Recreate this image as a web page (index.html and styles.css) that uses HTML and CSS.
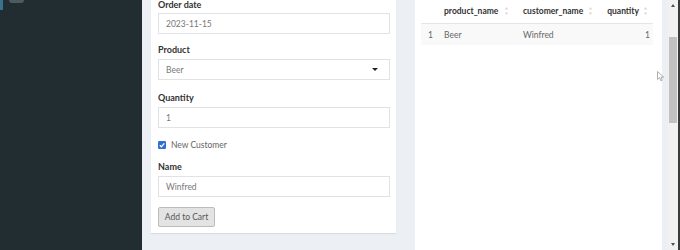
FILE: index.html
```html
<!DOCTYPE html>
<html>
<head>
<meta charset="utf-8">
<link rel="stylesheet" href="styles.css">
</head>
<body>
<aside class="sidebar">
  <div class="sidebar-top">
    <span class="bit-blue"></span>
    <span class="bit-grey"></span>
  </div>
</aside>
<main class="content">
  <section class="box form-box">
    <div class="group">
      <div class="label label-first">Order date</div>
      <div class="input">2023-11-15</div>
    </div>
    <div class="group group-select">
      <div class="label">Product</div>
      <div class="input select"><span>Beer</span><span class="caret"></span></div>
    </div>
    <div class="group group-qty">
      <div class="label">Quantity</div>
      <div class="input">1</div>
    </div>
    <div class="check-row">
      <svg class="checkbox" width="8" height="8" viewBox="0 0 8 8"><rect x="0" y="0" width="8" height="8" rx="1.2" fill="#2f6fd1"/><polyline points="1.8,4.2 3.4,5.8 6.3,2.4" fill="none" stroke="#fff" stroke-width="1.3"/></svg>
      <span>New Customer</span>
    </div>
    <div class="group">
      <div class="label">Name</div>
      <div class="input">Winfred</div>
    </div>
    <button class="btn">Add to Cart</button>
  </section>
  <section class="box table-box">
    <table class="dt">
      <colgroup><col class="c-idx"><col class="c-prod"><col class="c-cust"><col class="c-qty"></colgroup>
      <thead>
        <tr>
          <th></th>
          <th><div class="th-in"><span>product_name</span><svg class="sort" width="3" height="8" viewBox="0 0 3 8"><polygon points="1.5,0 3,2.5 0,2.5" fill="#d4d4d4"/><polygon points="0,5.5 3,5.5 1.5,8" fill="#d4d4d4"/></svg></div></th>
          <th><div class="th-in"><span>customer_name</span><svg class="sort" width="3" height="8" viewBox="0 0 3 8"><polygon points="1.5,0 3,2.5 0,2.5" fill="#d4d4d4"/><polygon points="0,5.5 3,5.5 1.5,8" fill="#d4d4d4"/></svg></div></th>
          <th><div class="th-in th-right"><span>quantity</span><svg class="sort" width="3" height="8" viewBox="0 0 3 8"><polygon points="1.5,0 3,2.5 0,2.5" fill="#d4d4d4"/><polygon points="0,5.5 3,5.5 1.5,8" fill="#d4d4d4"/></svg></div></th>
        </tr>
      </thead>
      <tbody>
        <tr class="odd">
          <td class="idx">1</td>
          <td class="txt">Beer</td>
          <td class="txt">Winfred</td>
          <td class="num">1</td>
        </tr>
      </tbody>
    </table>
    <svg class="cursor" width="8" height="11" viewBox="0 0 8 11"><path d="M0.5 0.5 L0.5 8.5 L2.5 6.6 L3.9 9.8 L5.2 9.2 L3.9 6.2 L6.8 6.2 Z" fill="#fff" stroke="#9a9a9a" stroke-width="0.8"/></svg>
  </section>
</main>
<div class="scrollbar">
  <div class="sb-arrow"><span class="tri-up"></span></div>
  <div class="sb-thumb"></div>
  <div class="sb-fill"></div>
  <div class="sb-arrow sb-arrow-down"><span class="tri-down"></span></div>
</div>
</body>
</html>
```
FILE: styles.css
```css
html, body {
  margin: 0;
  padding: 0;
}
body {
  width: 680px;
  height: 250px;
  overflow: hidden;
  display: flex;
  font-family: Lato, "Open Sans", sans-serif;
  font-size: 8.5px;
  color: #333;
}
.sidebar {
  width: 142px;
  flex: none;
  background: #222d32;
}
.sidebar-top {
  display: flex;
  align-items: flex-start;
}
.bit-blue {
  width: 3px;
  height: 10px;
  background: #3b6f8e;
}
.bit-grey {
  margin-left: 6px;
  width: 15px;
  height: 3px;
  background: #4d5b61;
  border-radius: 0 0 5px 5px;
}
.content {
  flex: 1;
  background: #ecf0f5;
  display: flex;
  align-items: flex-start;
  padding: 0 6px 0 9px;
  gap: 19px;
}
.box {
  background: #fff;
}
.form-box {
  width: 245px;
  box-sizing: border-box;
  padding: 0 6px 6px 7px;
  box-shadow: 0 1px 1px rgba(0,0,0,0.08);
}
.group {
  margin-bottom: 10px;
}
.group-select {
  margin-bottom: 12px;
}
.group-qty {
  margin-bottom: 11px;
}
.label {
  font-size: 9px;
  font-weight: bold;
  line-height: 12px;
  margin-bottom: 3px;
  color: #333;
}
.label-first {
  line-height: 10px;
}
.input {
  height: 21px;
  box-sizing: border-box;
  border: 1px solid #dfe2e7;
  padding: 0 7px;
  display: flex;
  align-items: center;
  color: #777;
}
.select {
  justify-content: space-between;
  padding-right: 11px;
}
.caret {
  width: 0;
  height: 0;
  border-left: 3px solid transparent;
  border-right: 3px solid transparent;
  border-top: 3px solid #222;
}
.check-row {
  height: 12px;
  display: flex;
  align-items: center;
  gap: 5px;
  margin-bottom: 10px;
  color: #666;
}
.checkbox {
  display: block;
  flex: none;
}
.btn {
  display: block;
  width: 57px;
  height: 20px;
  box-sizing: border-box;
  padding: 0;
  border: 1px solid #bcbcbc;
  border-radius: 2px;
  background: #e3e3e3;
  color: #555;
  font-family: inherit;
  font-size: 8.5px;
  margin: 0;
}
.table-box {
  width: 247px;
  align-self: stretch;
  box-sizing: border-box;
  padding: 0 9px 0 6px;
  position: relative;
}
.dt {
  width: 232px;
  table-layout: fixed;
  border-collapse: collapse;
}
.c-idx { width: 16px; }
.c-prod { width: 79px; }
.c-cust { width: 84px; }
.c-qty { width: 53px; }
.dt th {
  height: 21px;
  padding: 0 0 2px 0;
  font-weight: bold;
  color: #333;
  border-bottom: 1px solid #e6e6e6;
  vertical-align: middle;
}
.th-in {
  display: flex;
  align-items: center;
  justify-content: space-between;
  padding: 0 8px 0 7px;
}
.th-right {
  justify-content: flex-end;
  gap: 5px;
  padding: 0 6px 0 0;
}
.sort {
  display: block;
}
.dt td {
  height: 21px;
  padding: 0;
  color: #666;
  vertical-align: middle;
}
.odd {
  background: #f9f9f9;
}
.idx, .txt {
  padding-left: 7px !important;
}
.num {
  text-align: right;
  padding-right: 3px !important;
}
.cursor {
  position: absolute;
  left: 242px;
  top: 71px;
}
.scrollbar {
  width: 10px;
  flex: none;
  background: #f1f1f1;
  border-right: 2px solid #3a3a3a;
  display: flex;
  flex-direction: column;
  align-items: center;
}
.sb-arrow {
  height: 10px;
  width: 100%;
  display: flex;
  align-items: center;
  justify-content: center;
}
.sb-arrow-down {
  height: 12px;
}
.tri-up {
  width: 0;
  height: 0;
  border-left: 2px solid transparent;
  border-right: 2px solid transparent;
  border-bottom: 3px solid #505050;
}
.tri-down {
  width: 0;
  height: 0;
  border-left: 2px solid transparent;
  border-right: 2px solid transparent;
  border-top: 3px solid #505050;
}
.sb-thumb {
  margin-top: 27px;
  width: 8px;
  height: 86px;
  background: #c1c1c1;
}
.sb-fill {
  flex: 1;
}
```
